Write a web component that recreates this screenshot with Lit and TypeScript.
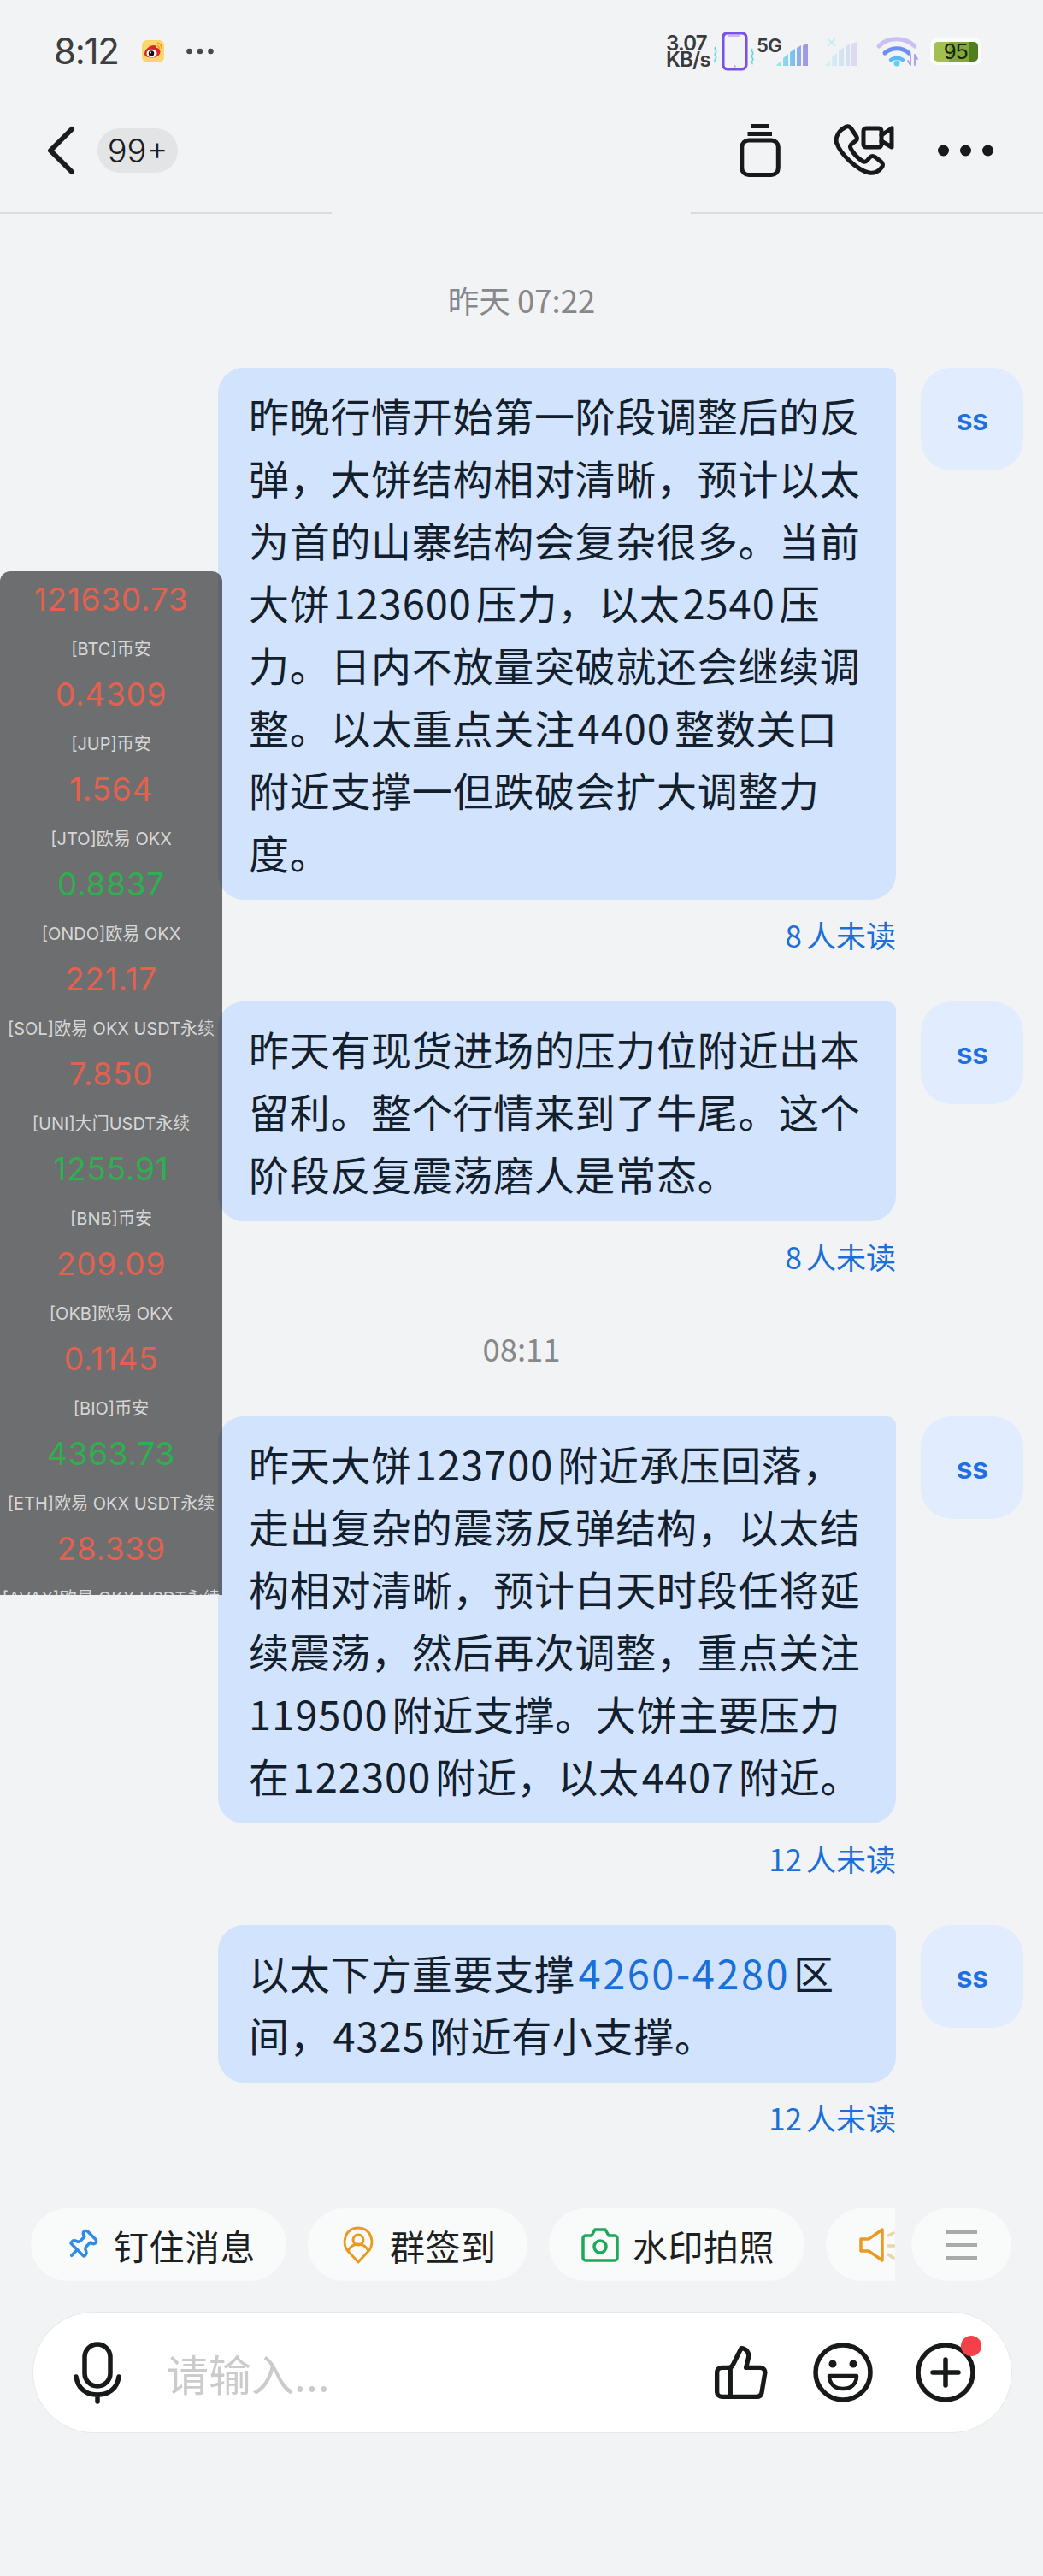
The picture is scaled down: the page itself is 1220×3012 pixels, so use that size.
import { LitElement, html, css, svg } from "lit";
import { customElement } from "lit/decorators.js";

interface Msg { lines: string[]; read: string; before?: string; }

const MSGS: Msg[] = [
  {
    before: "昨天 07:22",
    lines: ["昨晚行情开始第一阶段调整后的反", "弹，大饼结构相对清晰，预计以太", "为首的山寨结构会复杂很多。当前", "大饼123600压力，以太2540压", "力。日内不放量突破就还会继续调", "整。以太重点关注4400整数关口", "附近支撑一但跌破会扩大调整力", "度。"],
    read: "8人未读",
  },
  { lines: ["昨天有现货进场的压力位附近出本", "留利。整个行情来到了牛尾。这个", "阶段反复震荡磨人是常态。"], read: "8人未读" },
  {
    before: "08:11",
    lines: ["昨天大饼123700附近承压回落，", "走出复杂的震荡反弹结构，以太结", "构相对清晰，预计白天时段任将延", "续震荡，然后再次调整，重点关注", "119500附近支撑。大饼主要压力", "在122300附近，以太4407附近。"],
    read: "12人未读",
  },
  { lines: ["以太下方重要支撑4260-4280区", "间，4325附近有小支撑。"], read: "12人未读" },
];

const TICKS: [string, string, boolean][] = [
  ["121630.73", "[BTC]币安", false],
  ["0.4309", "[JUP]币安", false],
  ["1.564", "[JTO]欧易 OKX", false],
  ["0.8837", "[ONDO]欧易 OKX", true],
  ["221.17", "[SOL]欧易 OKX USDT永续", false],
  ["7.850", "[UNI]大门USDT永续", false],
  ["1255.91", "[BNB]币安", true],
  ["209.09", "[OKB]欧易 OKX", false],
  ["0.1145", "[BIO]币安", false],
  ["4363.73", "[ETH]欧易 OKX USDT永续", true],
  ["28.339", "[AVAX]欧易 OKX USDT永续", false],
];

const bars = (op: number, id: string) => svg`
  <defs><linearGradient id=${id} x1="0" x2="1" y1="0" y2="0"><stop offset="0" stop-color="#a8ecec"/><stop offset=".5" stop-color="#78c6ee"/><stop offset="1" stop-color="#a792e6"/></linearGradient></defs>
  <path opacity=${op} fill="url(#${id})" d="M0 26 L7 20 V26Z M9 26 V17 L15 12 V26Z M17 26 V10 L23 6 V26Z M25 26 V5 L30 2 V26Z M32 26 V2 L38 0 V26Z"/>`;

const fmtLine = (line: string) => {
  const parts = line.split(/(\d[\d-]*)/);
  return parts.map((part, i) => {
    if (i % 2 === 0) return part;
    const cls = `num-run ${i === 1 && parts[0] === "" ? "first" : ""} ${part.includes("-") ? "link" : ""}`;
    return html`<span class=${cls}>${part}</span>`;
  });
};

@customElement("app-root")
export class AppRoot extends LitElement {
  static styles = css`
    :host { display: block; width: 1220px; height: 3012px; background: #f2f3f5; position: relative; overflow: hidden; font-family: "Noto Sans CJK SC", "Noto Sans", sans-serif; color: #17191c; }
    svg { display: block; flex: none; overflow: visible; }

    .status { height: 120px; display: flex; align-items: center; padding: 0 72px 0 63px; box-sizing: border-box; }
    .clock { font: 400 42px/1 Inter, sans-serif; color: #3d3e40; width: 76px; letter-spacing: -1.3px; white-space: nowrap; }
    .weibo { margin-left: 27px; }
    .sdots { margin-left: 26px; }
    .sright { margin-left: auto; display: flex; align-items: center; }
    .net { font: 600 24px/19px Inter, sans-serif; color: #3a3b3d; width: 51px; letter-spacing: -.8px; white-space: nowrap; }
    .sig2 { margin-left: 19px; }
    .wifi { margin-left: 24px; }
    .batt { margin-left: 14px; width: 60px; height: 31px; background: #fbfcfc; border-radius: 7px; display: flex; align-items: center; justify-content: center; }
    .batt-in { width: 52px; height: 23px; border-radius: 5px; background: linear-gradient(90deg, #a3bf50 0 35%, #84a63a 35% 78%, #4f7d1f 78%); font: 400 26px/23px "Liberation Sans", sans-serif; color: #18240c; text-align: center; letter-spacing: -.5px; }

    .head { height: 112px; display: flex; align-items: center; padding-left: 56px; margin-bottom: 16px; }
    .badge { margin-left: 26px; width: 94px; height: 52px; border-radius: 26px; background: #e3e4e6; font: 300 38px/52px Inter, sans-serif; text-align: center; color: #1c1d1f; white-space: nowrap; }
    .hright { margin-left: auto; display: flex; align-items: center; padding-right: 58px; }
    .hcall { margin-left: 62px; }
    .hdots { margin-left: 51px; }
    .rule { display: flex; justify-content: space-between; height: 2px; }
    .rule i { display: block; background: #dadbdd; }
    .rule i:first-child { width: 388px; }
    .rule i:last-child { width: 412px; }

    .list { padding: 77px 23px 0 0; display: flex; flex-direction: column; align-items: flex-end; }
    .time { align-self: stretch; margin-right: -23px; text-align: center; font-size: 36.5px; line-height: 48px; color: #87888b; margin-bottom: 55px; }
    .time.later { margin-top: 60px; }
    .row { display: flex; gap: 29px; align-items: flex-start; }
    .row.next { margin-top: 54px; }
    .bubble { width: 757px; background: #d2e3fd; padding: 18px 0 20px 36px; border-radius: 30px 10px 30px 30px; font-size: 47px; line-height: 73px; color: #13202c; }
    .bubble span.ln { display: block; white-space: nowrap; letter-spacing: .7px; }
    .num-run { margin: 0 5px 0 3px; letter-spacing: 1px; }
    .num-run.first { margin-left: 0; }
    .link { color: #1a6fd8; letter-spacing: 2.5px; margin: 0 4px; }
    .avatar { width: 120px; height: 120px; border-radius: 36px; background: #e1ecff; color: #1f6fe0; font: 600 35px/120px Inter, sans-serif; text-align: center; letter-spacing: -.8px; }
    .read { width: 100%; box-sizing: border-box; padding-right: 149px; text-align: right; font-size: 35px; line-height: 48px; color: #1a6fd8; margin-top: 17px; }
    .read b { font-weight: 400; margin-right: 5px; }

    .tools { display: flex; margin-top: 82px; padding-left: 36px; }
    .scroll { width: 1011px; display: flex; gap: 25px; overflow: hidden; flex: none; }
    .chip { height: 85px; border-radius: 43px; background: #f9fafa; display: flex; align-items: center; flex: none; font-size: 41px; letter-spacing: .5px; color: #1d1f21; box-sizing: border-box; white-space: nowrap; }
    .c1 { width: 299px; padding-left: 41px; gap: 18px; }
    .c2 { width: 257px; padding-left: 41px; gap: 19px; }
    .c3 { width: 299px; padding-left: 38px; gap: 16px; }
    .c4 { width: 200px; padding-left: 39px; }
    .menu { margin-left: 19px; width: 117px; height: 85px; border-radius: 43px; background: #f9fafa; display: flex; flex-direction: column; justify-content: center; align-items: center; gap: 11px; }
    .menu i { display: block; width: 36px; height: 4px; background: #a9a9a9; }

    .input { margin: 36px 36px 0 38px; height: 142px; border-radius: 71px; background: #fff; border: 1px solid #e7e8ea; box-sizing: border-box; display: flex; align-items: center; padding: 0 42px 0 47px; }
    .ph { margin-left: 52px; font-size: 50px; color: #cbcbcb; white-space: nowrap; }
    .iright { margin-left: auto; display: flex; align-items: center; gap: 50px; }
    .plus { position: relative; }
    .dot { position: absolute; right: -7px; top: -8px; width: 24px; height: 24px; border-radius: 50%; background: #f54049; }

    .panel { position: absolute; left: 0; top: 668px; width: 260px; height: 1197px; padding-top: 5px; box-sizing: border-box; overflow: hidden; background: rgba(0,0,0,.55); border-radius: 12px 12px 0 0; text-align: center; white-space: nowrap; }
    .num { font: 400 37px/56px Inter, sans-serif; color: #e2614f; letter-spacing: .7px; }
    .num.up { color: #2eb04f; }
    .lab { font-family: Inter, "Noto Sans CJK SC", sans-serif; font-size: 20px; line-height: 50px; padding-top: 5px; color: #d6d6d6; }
  `;

  render() {
    return html`
      <div class="status">
        <div class="clock">8:12</div>
        <svg class="weibo" width="26" height="26" viewBox="0 0 26 26">
          <rect width="26" height="26" rx="6" fill="#fdd66a"/>
          <path d="M3 16c0-5 6-10 11-10 2 0 3 1 2.500 3 3 0 5 2 5 4.500 0 4-4.500 7-9.500 7S3 19 3 16z" fill="#d8262a"/>
          <ellipse cx="11.500" cy="15.500" rx="6" ry="4.800" fill="#fff"/>
          <circle cx="11" cy="15.500" r="3.200" fill="#111"/>
          <circle cx="10" cy="14.500" r="1" fill="#fff"/>
          <path d="M18 3c3 1 5 3 5 7M18 6.500c1.500.5 2.500 1.500 2.500 3.500" fill="none" stroke="#ee9a2a" stroke-width="1.400"/>
        </svg>
        <svg class="sdots" width="32" height="8" viewBox="0 0 32 8" fill="#48494b"><circle cx="3.500" cy="4" r="3.300"/><circle cx="16" cy="4" r="3.300"/><circle cx="28.500" cy="4" r="3.300"/></svg>
        <div class="sright">
          <div class="net">3.07<br />KB/s</div>
          <svg width="56" height="46" viewBox="0 0 56 46">
            <rect x="15.800" y="1.800" width="27" height="42" rx="5" fill="none" stroke="#7a52e6" stroke-width="3.500"/>
            <path d="M22 5h14" stroke="#b7a4ef" stroke-width="1.500"/>
            <circle cx="29.500" cy="40.500" r="1.200" fill="#b7a4ef"/>
            <path d="M7 18c-3 3 3 4 0 7s3 4 0 7s1 3 0 4M50 20c-3 3 3 4 0 7s3 4 0 7s1 3 0 4" fill="none" stroke="#63d8dc" stroke-width="1.600"/>
          </svg>
          <svg width="60" height="46" viewBox="0 0 60 46" style="margin-left:-1px">
            <text x="0" y="24" font-family="Inter, sans-serif" font-size="22" font-weight="600" letter-spacing="-.6" fill="#3a3b3d">5G</text>
            <g transform="translate(22 14)">${bars(1, "g1")}</g>
          </svg>
          <svg class="sig2" width="38" height="46" viewBox="0 0 38 46">
            <g transform="translate(0 12) scale(1 1.080)">${bars(.28, "g2")}</g>
            <path d="M4 8l9 9M13 8l-9 9" stroke="#bdeceb" stroke-width="1.600"/>
          </svg>
          <svg class="wifi" width="48" height="36" viewBox="0 0 48 36" fill="none" stroke-linecap="round">
            <path d="M2 12C12 1 33 1 44 12" stroke="#cbc0f2" stroke-width="5"/>
            <path d="M9 20c8-7 20-7 28 0" stroke="#6d8ff1" stroke-width="5"/>
            <path d="M16 28c4-3 10-3 14 0" stroke="#62b6f5" stroke-width="4.500"/>
            <circle cx="23" cy="32" r="3.500" fill="#5fd3f2" stroke="none"/>
            <path d="M39 22v12M44 22v12M36 29l3 5M47 27l-3-5" stroke="#ab9be4" stroke-width="1.800"/>
          </svg>
          <div class="batt"><div class="batt-in">95</div></div>
        </div>
      </div>

      <div class="head">
        <svg width="32" height="56" viewBox="0 0 32 56" fill="none" stroke="#1b1c1e" stroke-width="6" stroke-linecap="round" stroke-linejoin="round"><path d="M28 3 3 28l25 25"/></svg>
        <div class="badge">99+</div>
        <div class="hright">
          <svg width="48" height="62" viewBox="0 0 48 62" fill="none" stroke="#17191b" stroke-width="5">
            <rect x="2.800" y="19" width="42.500" height="40.500" rx="8"/>
            <path d="M13 2.500h21M9.500 11.500h28.500"/>
          </svg>
          <svg class="hcall" width="71" height="62" viewBox="0 0 71 62" fill="none" stroke="#17191b" stroke-width="5" stroke-linejoin="round" stroke-linecap="round">
            <path d="M14 3.500c2.500-1.500 5-.5 6.500 1.500l6 9c1.500 2.500 1 4.500-1 6l-4 3c-2 1.500-2.500 3.500-1.500 5.500 3.500 6.500 7.500 11 14 15 2 1.200 4 .8 5.500-1l2.500-3c2-2.300 4.300-2.500 6.500-1l7 5.500c2.500 2 2.500 4.500 1 6.500-3 4.500-9 8-15 6.500C27 53.500 8 35 3.500 22 1.500 14.500 7 7 14 3.500z"/>
            <rect x="35" y="5" width="21" height="22" rx="3"/>
            <path d="M56 13l12-8v22l-12-7"/>
          </svg>
          <svg class="hdots" width="65" height="14" viewBox="0 0 65 14" fill="#17191b"><circle cx="6.500" cy="7" r="6.500"/><circle cx="32.500" cy="7" r="6.500"/><circle cx="58.500" cy="7" r="6.500"/></svg>
        </div>
      </div>
      <div class="rule"><i></i><i></i></div>

      <div class="list">
        ${MSGS.map((m, i) => html`
          ${m.before ? html`<div class="time ${i ? "later" : ""}">${m.before}</div>` : ""}
          <div class="row ${i && !m.before ? "next" : ""}">
            <div class="bubble">${m.lines.map((l) => html`<span class="ln">${fmtLine(l)}</span>`)}</div>
            <div class="avatar">ss</div>
          </div>
          <div class="read"><b>${m.read.replace("人未读", "")}</b>人未读</div>
        `)}
      </div>

      <div class="tools">
        <div class="scroll">
          <div class="chip c1">
            <svg width="38" height="38" viewBox="0 0 24 24" fill="none" stroke="#2f8be6" stroke-width="2.200" stroke-linecap="round" stroke-linejoin="round"><g transform="rotate(45 12 12)"><path d="M12 17v6"/><path d="M9 10.760a2 2 0 0 1-1.110 1.790l-1.780.9A2 2 0 0 0 5 15.240V16a1 1 0 0 0 1 1h12a1 1 0 0 0 1-1v-.76a2 2 0 0 0-1.110-1.790l-1.780-.9A2 2 0 0 1 15 10.760V7a1 1 0 0 1 1-1 2 2 0 0 0 0-4H8a2 2 0 0 0 0 4 1 1 0 0 1 1 1z"/></g></svg>
            <span>钉住消息</span>
          </div>
          <div class="chip c2">
            <svg width="36" height="44" viewBox="0 0 36 44" fill="none" stroke="#e99a1f" stroke-width="3" stroke-linejoin="round"><path d="M18 42 5 28C-1 20 2 2 18 2s19 18 13 26z"/><circle cx="18" cy="16" r="6"/><path d="M6 29c3-6 7-8 12-8s9 2 12 8"/></svg>
            <span>群签到</span>
          </div>
          <div class="chip c3">
            <svg width="44" height="40" viewBox="0 0 44 40" fill="none" stroke="#1ea85a" stroke-width="3.500" stroke-linejoin="round"><path d="M2 12a3 3 0 0 1 3-3h7l4-7h12l4 7h7a3 3 0 0 1 3 3v23a3 3 0 0 1-3 3H5a3 3 0 0 1-3-3z"/><circle cx="22" cy="22" r="7"/></svg>
            <span>水印拍照</span>
          </div>
          <div class="chip c4">
            <svg width="42" height="40" viewBox="0 0 42 40" fill="none" stroke-linecap="round" stroke-linejoin="round"><path d="M2 13h9L27 2v36L11 27H2z" stroke="#e99a1f" stroke-width="3.500"/><path d="M34 9l6-3M34 21h7M34 31l6 4" stroke="#ecd5a8" stroke-width="3.500"/></svg>
          </div>
        </div>
        <div class="menu"><i></i><i></i><i></i></div>
      </div>

      <div class="input">
        <svg width="56" height="72" viewBox="0 0 56 72" fill="none" stroke="#17191b" stroke-width="5.500" stroke-linecap="round"><rect x="13" y="3" width="30" height="49" rx="15"/><path d="M3 41c2 14 12 21 25 21s23-7 25-21M28 62v8"/></svg>
        <div class="ph">请输入...</div>
        <div class="iright">
          <svg width="68" height="68" viewBox="0 0 24 24" fill="none" stroke="#17191b" stroke-width="1.900" stroke-linejoin="round" stroke-linecap="round"><path d="M7.500 10v12"/><path d="M15 5.880 14 10h5.830a2 2 0 0 1 1.920 2.560l-1.330 8A2 2 0 0 1 18.500 22H4a2 2 0 0 1-2-2v-8a2 2 0 0 1 2-2h2.760a2 2 0 0 0 1.790-1.110L12 2a3.130 3.130 0 0 1 3 3.880Z"/></svg>
          <svg width="70" height="70" viewBox="0 0 70 70" fill="none" stroke="#17191b" stroke-width="5.500"><circle cx="35" cy="35" r="32"/><circle cx="23" cy="25" r="4.500" fill="#17191b" stroke="none"/><circle cx="47" cy="25" r="4.500" fill="#17191b" stroke="none"/><path d="M19 39h32c0 10-7 15-16 15s-16-5-16-15z" stroke-width="4.500" stroke-linejoin="round"/></svg>
          <div class="plus">
            <svg width="70" height="70" viewBox="0 0 70 70" fill="none" stroke="#17191b" stroke-width="5.500" stroke-linecap="round"><circle cx="35" cy="35" r="32"/><path d="M35 20v30M20 35h30"/></svg>
            <div class="dot"></div>
          </div>
        </div>
      </div>

      <div class="panel">
        ${TICKS.map(([n, l, up]) => html`<div class="num ${up ? "up" : ""}">${n}</div><div class="lab">${l}</div>`)}
      </div>
    `;
  }
}
